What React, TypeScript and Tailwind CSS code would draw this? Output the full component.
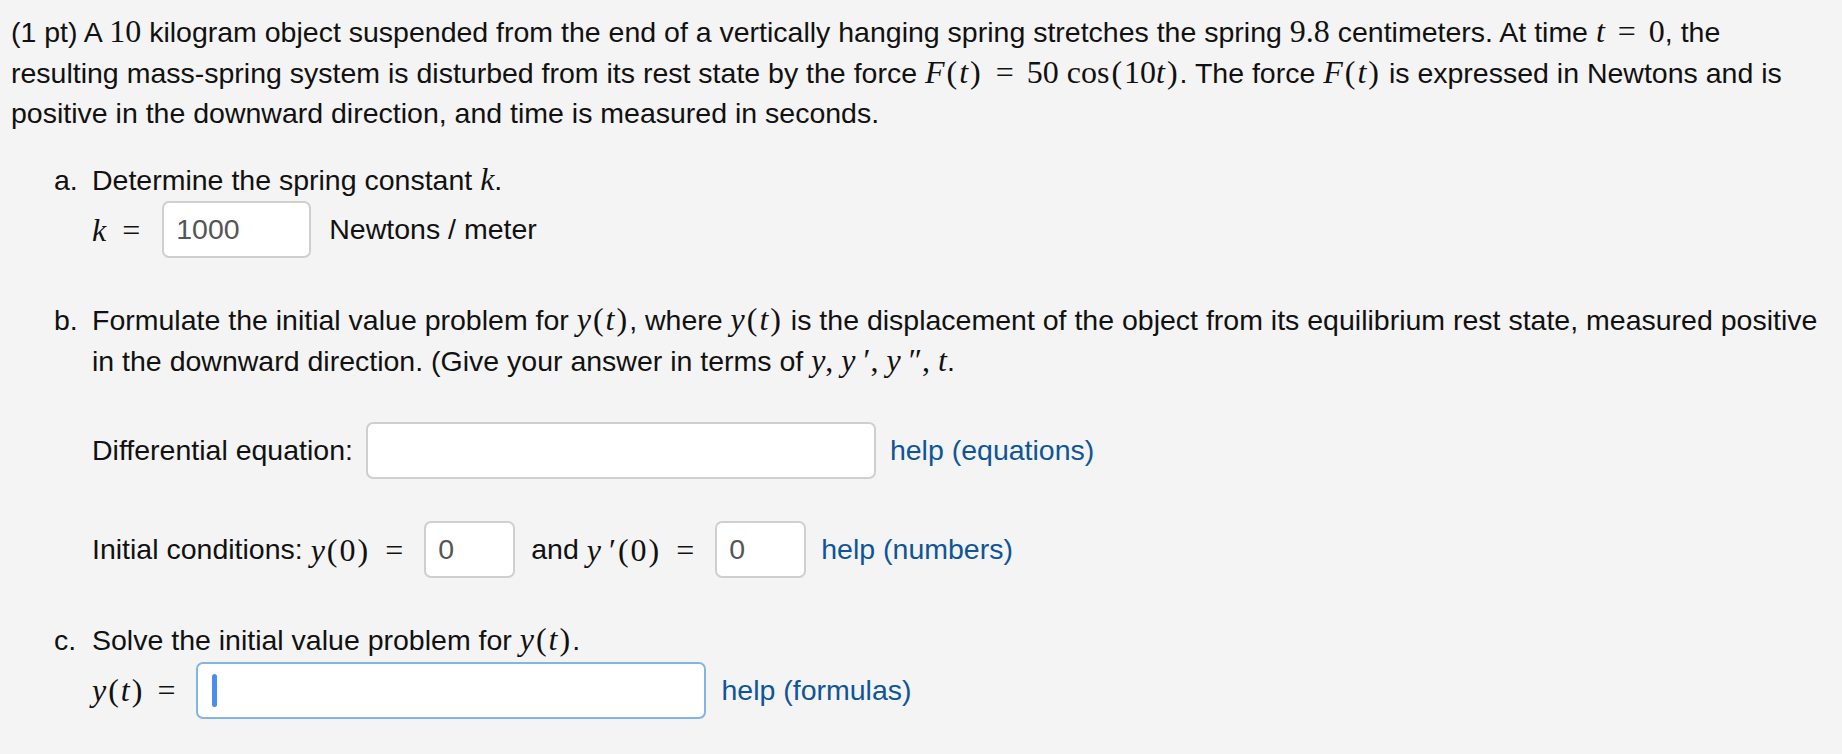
import React from "react";

const M = ({ children }: { children: React.ReactNode }) => (
  <span className="font-['Liberation_Serif',serif] text-[32px] leading-none">{children}</span>
);
const V = ({ children }: { children: React.ReactNode }) => <i className="italic">{children}</i>;
const Eq = () => <span className="mx-[13px]">=</span>;
const P = ({ children }: { children: React.ReactNode }) => <span className="mx-[2px]">{children}</span>;

const Box = ({ w, value, focused }: { w: string; value?: string; focused?: boolean }) => (
  <div
    className={`${w} h-[57px] shrink-0 rounded-[7px] bg-white flex items-center px-[12px] text-[#555] border-2 ${
      focused ? "border-[#84b5e2]" : "border-[#cfcfcf]"
    }`}
  >
    {focused ? <span className="w-[5px] h-[33px] rounded-full bg-[#4a8cf0] ml-[2px]" /> : value}
  </div>
);

const Help = ({ children }: { children: React.ReactNode }) => (
  <span className="text-[#0f5597]">{children}</span>
);

export default function App() {
  return (
    <div className="min-h-screen w-full bg-[#f4f4f4] font-['Liberation_Sans',Arial,sans-serif] text-[28.5px] leading-[40.5px] text-[#111] pl-[11px] pr-[10px] pt-[12px]">
      <p className="whitespace-nowrap">
        (1 pt) A <M>10</M> kilogram object suspended from the end of a vertically hanging spring stretches the spring{" "}
        <M>9.8</M> centimeters. At time{" "}
        <M>
          <V>t</V>
          <Eq />0
        </M>
        , the
        <br />
        resulting mass-spring system is disturbed from its rest state by the force{" "}
        <M>
          <V>F</V>
          <P>(</P>
          <V>t</V>
          <P>)</P>
          <Eq />
          50&nbsp;cos<P>(</P>10<V>t</V>
          <P>)</P>
        </M>
        . The force{" "}
        <M>
          <V>F</V>
          <P>(</P>
          <V>t</V>
          <P>)</P>
        </M>{" "}
        is expressed in Newtons and is
        <br />
        positive in the downward direction, and time is measured in seconds.
      </p>

      <div className="mt-[26px] flex">
        <span className="w-[81px] pl-[43px] shrink-0">a.</span>
        <div className="flex flex-col">
          <div>
            Determine the spring constant{" "}
            <M>
              <V>k</V>
            </M>
            .
          </div>
          <div className="mt-[1px] flex items-center h-[57px]">
            <M>
              <V>k</V>
              <span className="ml-[16px]">=</span>
            </M>
            <div className="ml-[22px]">
              <Box w="w-[149px]" value="1000" />
            </div>
            <span className="ml-[18px]">Newtons / meter</span>
          </div>
        </div>
      </div>

      <div className="mt-[42px] flex">
        <span className="w-[81px] pl-[43px] shrink-0">b.</span>
        <div className="flex flex-col">
          <div className="whitespace-nowrap">
            Formulate the initial value problem for{" "}
            <M>
              <V>y</V>
              <P>(</P>
              <V>t</V>
              <P>)</P>
            </M>
            , where{" "}
            <M>
              <V>y</V>
              <P>(</P>
              <V>t</V>
              <P>)</P>
            </M>{" "}
            is the displacement of the object from its equilibrium rest state, measured positive
            <br />
            in the downward direction. (Give your answer in terms of{" "}
            <M>
              <V>y</V>, <V>y</V> ′, <V>y</V> ″, <V>t</V>
            </M>
            .
          </div>

          <div className="mt-[41px] flex items-center h-[57px]">
            <span>Differential equation:</span>
            <div className="ml-[13px]">
              <Box w="w-[510px]" />
            </div>
            <span className="ml-[14px]">
              <Help>help (equations)</Help>
            </span>
          </div>

          <div className="mt-[42px] flex items-center h-[57px]">
            <span>Initial conditions:&nbsp;</span>
            <M>
              <V>y</V>
              <P>(</P>0<P>)</P>
              <span className="ml-[15px]">=</span>
            </M>
            <div className="ml-[21px]">
              <Box w="w-[91px]" value="0" />
            </div>
            <span className="ml-[16px]">and&nbsp;</span>
            <M>
              <V>y</V> ′<P>(</P>0<P>)</P>
              <span className="ml-[15px]">=</span>
            </M>
            <div className="ml-[21px]">
              <Box w="w-[91px]" value="0" />
            </div>
            <span className="ml-[15px]">
              <Help>help (numbers)</Help>
            </span>
          </div>
        </div>
      </div>

      <div className="mt-[42px] flex">
        <span className="w-[81px] pl-[43px] shrink-0">c.</span>
        <div className="flex flex-col">
          <div>
            Solve the initial value problem for{" "}
            <M>
              <V>y</V>
              <P>(</P>
              <V>t</V>
              <P>)</P>
            </M>
            .
          </div>
          <div className="mt-[1px] flex items-center h-[57px]">
            <M>
              <V>y</V>
              <P>(</P>
              <V>t</V>
              <P>)</P>
              <span className="ml-[13px]">=</span>
            </M>
            <div className="ml-[21px]">
              <Box w="w-[510px]" focused />
            </div>
            <span className="ml-[15px]">
              <Help>help (formulas)</Help>
            </span>
          </div>
        </div>
      </div>
    </div>
  );
}
